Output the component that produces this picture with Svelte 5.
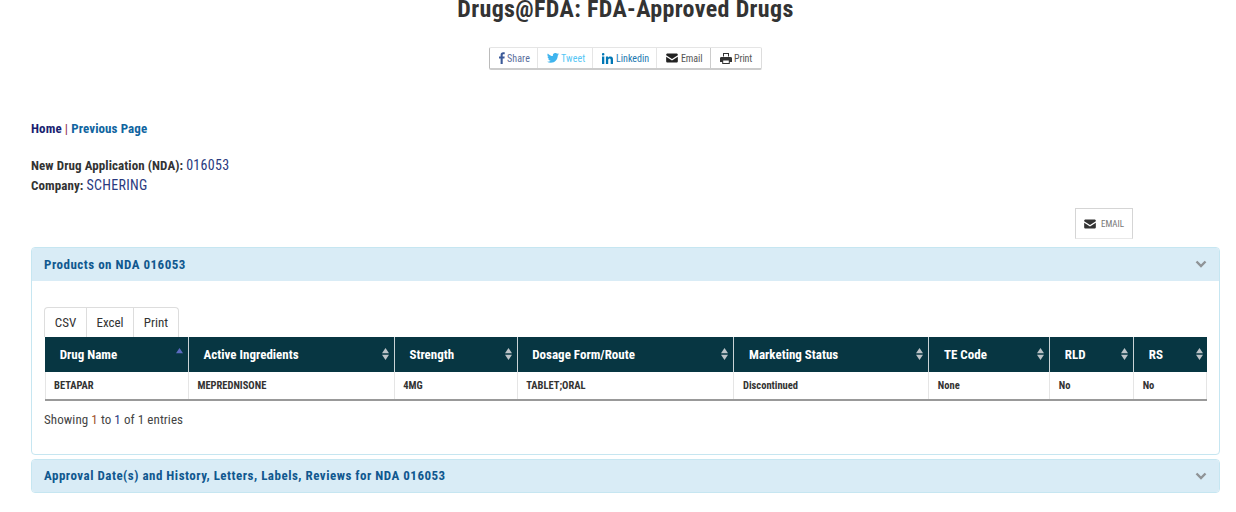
<script>
  const cols = [
    { name: 'Drug Name', value: 'BETAPAR', w: 144, sorted: true },
    { name: 'Active Ingredients', value: 'MEPREDNISONE', w: 206 },
    { name: 'Strength', value: '4MG', w: 123 },
    { name: 'Dosage Form/Route', value: 'TABLET;ORAL', w: 217 },
    { name: 'Marketing Status', value: 'Discontinued', w: 195 },
    { name: 'TE Code', value: 'None', w: 121 },
    { name: 'RLD', value: 'No', w: 84 },
    { name: 'RS', value: 'No', w: 73 }
  ];
  const mail = 'M0 2.2C0 1.3.7.6 1.6.6h10.8c.9 0 1.6.7 1.6 1.6v.5L7 7.2 0 2.7zM0 4.4v5.4c0 .9.7 1.6 1.6 1.6h10.8c.9 0 1.6-.7 1.6-1.6V4.4L7 8.9z';
</script>

<div class="page">
  <h1>Drugs@FDA: FDA-Approved Drugs</h1>

  <div class="share-wrap">
    <div class="share">
      <span class="sbtn fb">
        <svg width="6" height="12" viewBox="0 0 6 12"><path fill="#3b5998" d="M1.6 12V6.6H0V4.5h1.6V3C1.6 1.2 2.6.2 4.2.2c.7 0 1.3.1 1.5.1v1.9h-1c-.9 0-1 .4-1 1v1.3h2l-.3 2.1H3.700V12z"/></svg>
        <span class="l-fb">Share</span>
      </span>
      <span class="sbtn tw">
        <svg width="12" height="10" viewBox="0 0 24 20"><path fill="#3fb4ee" d="M24 2.4c-.9.4-1.8.7-2.8.8 1-.6 1.800-1.600 2.200-2.700-1 .6-2 1-3.100 1.200A4.900 4.900 0 0 0 11.900 6.200C7.800 6 4.200 4 1.700.9a4.900 4.900 0 0 0 1.500 6.600c-.8 0-1.600-.2-2.200-.6 0 2.400 1.700 4.400 3.900 4.900-.7.200-1.500.2-2.200.1.600 2 2.400 3.400 4.600 3.400A9.900 9.900 0 0 1 0 17.300 14 14 0 0 0 7.500 19.500c9.100 0 14.300-7.700 14-14.600 1-.7 1.800-1.500 2.500-2.500z"/></svg>
        <span class="l-tw">Tweet</span>
      </span>
      <span class="sbtn li">
        <svg width="11" height="11" viewBox="0 0 11 11"><path fill="#0077b5" d="M0 3.600h2.300V11H0zM1.150 0a1.300 1.300 0 1 1 0 2.600 1.300 1.300 0 0 1 0-2.600zM3.900 3.600h2.200v1c.4-.7 1.200-1.200 2.300-1.200 2.300 0 2.600 1.500 2.600 3.500V11H8.700V7.400c0-.9 0-1.900-1.100-1.900s-1.400.9-1.400 1.900V11H3.900z"/></svg>
        <span class="l-li">Linkedin</span>
      </span>
      <span class="sbtn em">
        <svg width="12" height="10" viewBox="0 0 14 12"><path fill="#222" d={mail}/></svg>
        <span class="l-dk">Email</span>
      </span>
      <span class="sbtn pr">
        <svg width="12" height="11" viewBox="0 0 12 11"><path fill="#333" d="M3 0h6v3.500H8V1H4v2.500H3zM1.300 4h9.400c.7 0 1.300.6 1.300 1.300V9H9.800v2H2.200V9H0V5.300C0 4.600.6 4 1.300 4zM3.200 7.500V10h5.600V7.500z"/></svg>
        <span class="l-dk">Print</span>
      </span>
    </div>
  </div>

  <p class="crumbs"><span class="home">Home</span> <span class="sep">|</span> <span class="prev">Previous Page</span></p>

  <div class="meta">
    <div class="mrow"><strong>New Drug Application (NDA):</strong> <span class="val">016053</span></div>
    <div class="mrow"><strong>Company:</strong> <span class="val">SCHERING</span></div>
  </div>

  <div class="email-row">
    <span class="email-btn">
      <svg width="12" height="10" viewBox="0 0 14 12"><path fill="#333" d={mail}/></svg>
      EMAIL
    </span>
  </div>

  <section class="panel">
    <header class="phead">
      <span>Products on NDA 016053</span>
      <svg width="12" height="8" viewBox="0 0 12 8"><path d="M1.500 1.500 6 6l4.500-4.500" fill="none" stroke="#8f9396" stroke-width="2.400"/></svg>
    </header>
    <div class="pbody">
      <div class="tools">
        <span>CSV</span><span>Excel</span><span>Print</span>
      </div>
      <div class="table">
        <div class="hrow">
          {#each cols as c}
            <div class="th" style="width:{c.w}px">
              <span>{c.name}</span>
              <svg width="7" height="12" viewBox="0 0 7 12">
                <path d="M3.500 0 7 5.300H0z" fill={c.sorted ? '#5c6bc0' : '#bcc3c7'}/>
                {#if !c.sorted}<path d="M3.500 12 7 6.700H0z" fill="#bcc3c7"/>{/if}
              </svg>
            </div>
          {/each}
        </div>
        <div class="brow">
          {#each cols as c}
            <div class="td" style="width:{c.w}px">{c.value}</div>
          {/each}
        </div>
      </div>
      <p class="info">Showing <span class="n1">1</span> to <span class="n2">1</span> of 1 entries</p>
    </div>
  </section>

  <section class="panel second">
    <header class="phead closed">
      <span>Approval Date(s) and History, Letters, Labels, Reviews for NDA 016053</span>
      <svg width="12" height="8" viewBox="0 0 12 8"><path d="M1.500 1.500 6 6l4.500-4.500" fill="none" stroke="#8f9396" stroke-width="2.400"/></svg>
    </header>
  </section>
</div>

<style>
  :global(body) {
    margin: 0;
    background: #fff;
    font-family: Roboto, "Liberation Sans", sans-serif;
    font-stretch: 75%;
    overflow: hidden;
  }
  .page {
    height: 512px;
    padding: 0 16px 0 31px;
    box-sizing: border-box;
    overflow: hidden;
    color: #333;
  }
  h1 {
    margin: -6px 0 0;
    text-align: center;
    font-size: 24px;
    line-height: 30px;
    font-weight: 700;
    color: #333;
    letter-spacing: .35px;
  }
  .share-wrap { display: flex; justify-content: center; margin-top: 23px; }
  .share {
    display: flex;
    box-sizing: border-box;
    height: 23px;
    border: 1px solid #e5e5e5;
    border-bottom: 2px solid #ccc;
    border-right-color: #ddd;
    border-left-color: #bbb;
    border-radius: 2px;
    font-size: 10px;
  }
  .sbtn {
    display: flex;
    align-items: center;
    gap: 3px;
    box-sizing: border-box;
    padding: 0 0 0 9px;
    border-right: 1px solid #e5e5e5;
  }
  .sbtn svg { flex: none; }
  .sbtn:last-child { border-right: 0; }
  .fb { width: 48px; gap: 2px; }
  .tw { width: 55px; gap: 2px; }
  .li { width: 64px; }
  .em { width: 54px; border-right: 1px solid #ccc; }
  .pr { width: 50px; gap: 2px; }
  .l-fb { color: #5a6e9c; letter-spacing: .1px; }
  .l-tw { color: #55c6f5; letter-spacing: .1px; }
  .l-li { color: #1b78b0; }
  .l-dk { color: #555; letter-spacing: -.1px; }

  .crumbs {
    margin: 51px 0 0;
    font-size: 13px;
    line-height: 16px;
    font-weight: 700;
    letter-spacing: .1px;
  }
  .home { color: #1a1f71; }
  .sep { color: #8a2b3a; font-weight: 400; }
  .prev { color: #10659f; }

  .meta { margin-top: 19px; font-size: 13px; }
  .mrow { height: 20px; line-height: 20px; }
  .meta strong { color: #333; letter-spacing: .08px; }
  .val { font-size: 14px; line-height: 14px; color: #2a3a80; letter-spacing: .3px; }

  .email-row { display: flex; justify-content: flex-end; padding-right: 87px; margin-top: 12px; }
  .email-btn {
    display: flex;
    align-items: center;
    gap: 5px;
    box-sizing: border-box;
    width: 58px;
    height: 31px;
    padding-left: 8px;
    border: 1px solid #d5d5d5;
    border-bottom-color: #e8e8e8;
    font-size: 9px;
    color: #777;
  }

  .panel {
    margin-top: 8px;
    border: 1px solid #c6e6f1;
    border-radius: 4px;
    overflow: hidden;
  }
  .second { margin-top: 4px; }
  .phead {
    display: flex;
    align-items: center;
    justify-content: space-between;
    box-sizing: border-box;
    height: 33px;
    padding: 0 12px 1px;
    background: #d9ecf6;
    color: #10588f;
    font-size: 13px;
    font-weight: 700;
    letter-spacing: .5px;
  }
  .closed { height: 32px; }
  .pbody { box-sizing: border-box; height: 173px; padding: 26px 12px 0; }
  .tools {
    display: inline-flex;
    height: 30px;
    box-sizing: border-box;
    border: 1px solid #ddd;
    border-bottom: 0;
    border-radius: 4px 4px 0 0;
    font-size: 13px;
    color: #333;
    vertical-align: top;
  }
  .tools span {
    display: flex;
    align-items: center;
    box-sizing: border-box;
    justify-content: center;
    padding-bottom: 1px;
    border-right: 1px solid #ddd;
    width: 42px;
  }
  .tools span:nth-child(2) { width: 47px; }
  .tools span:last-child { border-right: 0; width: 44px; }
  .table { width: 1163px; padding-left: 1px; box-sizing: border-box; }
  .hrow { display: flex; height: 35px; }
  .th {
    display: flex;
    align-items: center;
    justify-content: space-between;
    box-sizing: border-box;
    padding: 0 5px 1px 14.7px;
    background: #073642;
    border-right: 1px solid #c9d3d6;
    color: #fff;
    font-size: 13px;
    font-weight: 700;
  }
  .th:last-child { border-right: 0; padding-right: 4px; }
  .brow { display: flex; height: 29px; border-bottom: 2px solid #999; box-sizing: border-box; }
  .td {
    display: flex;
    align-items: center;
    box-sizing: border-box;
    padding-left: 8.6px;
    border-right: 1px solid #e5e5e5;
    font-size: 10.5px;
    font-weight: 700;
    color: #333;
  }
  .td:first-child { border-left: 1px solid #e5e5e5; padding-left: 8px; }
  .info { margin: 11px 0 0; font-size: 13px; line-height: 16px; color: #444; letter-spacing: .08px; }
  .n1 { color: #a0522d; }
  .n2 { color: #2a3a80; }
</style>
